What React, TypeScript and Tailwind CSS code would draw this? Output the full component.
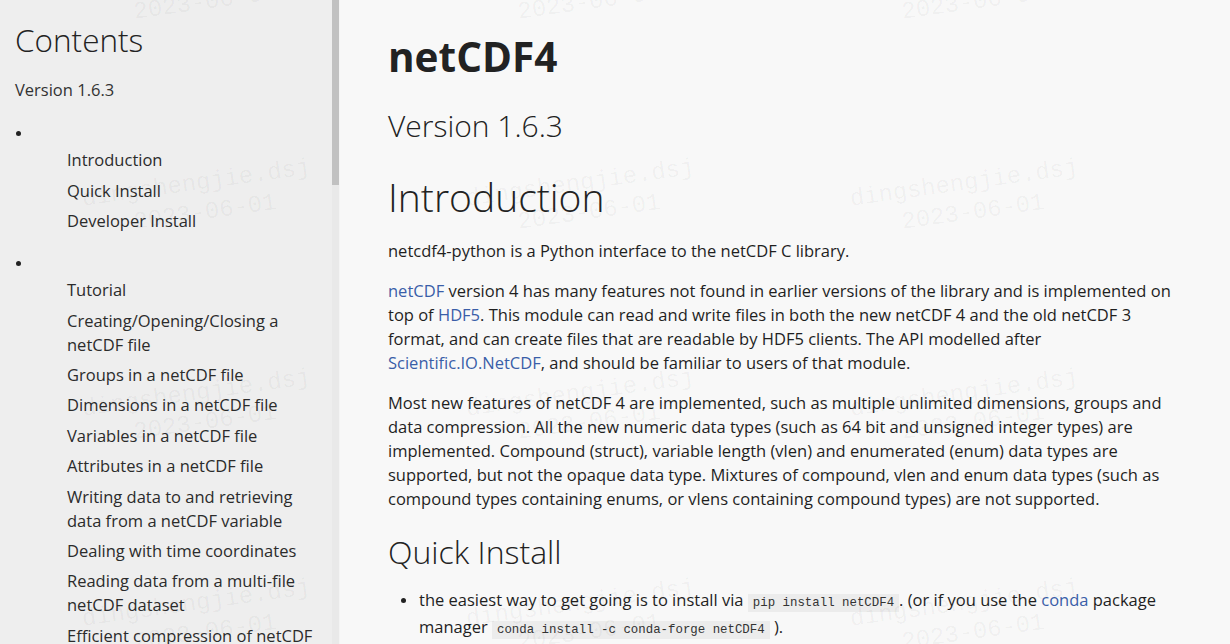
import React from 'react';

const intro = ['Introduction', 'Quick Install', 'Developer Install'];

const tutorial = [
  'Tutorial',
  'Creating/Opening/Closing a netCDF file',
  'Groups in a netCDF file',
  'Dimensions in a netCDF file',
  'Variables in a netCDF file',
  'Attributes in a netCDF file',
  'Writing data to and retrieving data from a netCDF variable',
  'Dealing with time coordinates',
  'Reading data from a multi-file netCDF dataset',
  'Efficient compression of netCDF variables',
  'Beyond homogeneous arrays of a fixed type - compound data types',
];

const wmX = [80, 464, 848];
const wmY = [-25, 185, 395, 605];

function Bullet() {
  return (
    <div className="h-6 flex items-center">
      <span className="block w-[5px] h-[5px] rounded-full bg-[#222] ml-[1px]" />
    </div>
  );
}

function TocGroup({ items }: { items: string[] }) {
  return (
    <li>
      <Bullet />
      <ul className="pl-[52px]">
        {items.map((t) => (
          <li key={t} className="py-[3.2px] leading-6">
            <a className="text-[#2b2b2b]">{t}</a>
          </li>
        ))}
      </ul>
    </li>
  );
}

function Code({ children }: { children: React.ReactNode }) {
  return (
    <code className="bg-[#ececec] px-[5px] py-[2px] text-[12.4px] text-[#333] font-['Liberation_Mono',monospace]">
      {children}
    </code>
  );
}

function Watermark() {
  return (
    <div className="absolute inset-0 pointer-events-none overflow-hidden">
      {wmY.map((y) =>
        wmX.map((x) => (
          <div
            key={`${x}-${y}`}
            className="absolute origin-top-left -rotate-[8deg] font-['Liberation_Mono',monospace] text-[24px] leading-[30px] text-black/[0.045] whitespace-nowrap"
            style={{ left: x, top: y }}
          >
            <div>dingshengjie.dsj</div>
            <div className="pl-[48px]">2023-06-01</div>
          </div>
        ))
      )}
    </div>
  );
}

export default function App() {
  return (
    <div className="relative flex h-[644px] w-[1230px] overflow-hidden font-['Open_Sans',sans-serif] text-[16.5px] text-[#1f1f1f]">
      <aside className="flex w-[340px] shrink-0 bg-[#eeeeee]">
        <nav className="w-[332px] pl-[15px] pr-[14px] overflow-hidden">
          <h1 className="mt-[20px] text-[31.5px] leading-[40px] font-light text-[#222]">Contents</h1>
          <p className="mt-[18px] leading-6 text-[#333]">Version 1.6.3</p>
          <ul className="mt-[19px] flex flex-col gap-[15px]">
            <TocGroup items={intro} />
            <TocGroup items={tutorial} />
          </ul>
        </nav>
        <div className="w-[8px] bg-[#e9e9e9] border-r border-[#f4f4f4]">
          <div className="h-[185px] w-[7px] bg-[#c1c1c1]" />
        </div>
      </aside>

      <main className="flex-1 bg-[#f8f8f8] pl-[48px] pt-[33px]">
        <div className="w-[790px]">
          <h1 className="text-[40.5px] leading-[48px] font-bold text-[#222]">netCDF4</h1>
          <h2 className="mt-[25px] text-[30px] leading-[40px] font-light text-[#222]">Version 1.6.3</h2>
          <h1 className="mt-[27px] text-[39px] leading-[48px] font-light text-[#222]">Introduction</h1>
          <p className="mt-[18px] leading-6">netcdf4-python is a Python interface to the netCDF C library.</p>
          <p className="mt-4 leading-6">
            <a className="text-[#3a5ea8]">netCDF</a> version 4 has many features not found in earlier versions of the library and is implemented on top of{' '}
            <a className="text-[#3a5ea8]">HDF5</a>. This module can read and write files in both the new netCDF 4 and the old netCDF 3 format, and can create files that are readable by HDF5 clients. The API modelled after{' '}
            <a className="text-[#3a5ea8]">Scientific.IO.NetCDF</a>, and should be familiar to users of that module.
          </p>
          <p className="mt-4 leading-6">
            Most new features of netCDF 4 are implemented, such as multiple unlimited dimensions, groups and data compression. All the new numeric data types (such as 64 bit and unsigned integer types) are implemented. Compound (struct), variable length (vlen) and enumerated (enum) data types are supported, but not the opaque data type. Mixtures of compound, vlen and enum data types (such as compound types containing enums, or vlens containing compound types) are not supported.
          </p>
          <h2 className="mt-[21px] text-[32px] leading-[40px] font-light text-[#222]">Quick Install</h2>
          <ul className="mt-4 flex flex-col">
            <li className="flex leading-6">
              <span className="w-[31px] shrink-0 flex justify-center pt-[10px]">
                <span className="block w-[5px] h-[5px] rounded-full bg-[#222]" />
              </span>
              <span>
                the easiest way to get going is to install via <Code>pip install netCDF4</Code>. (or if you use the{' '}
                <a className="text-[#3a5ea8]">conda</a> package manager <Code>conda install -c conda-forge netCDF4</Code> ).
              </span>
            </li>
          </ul>
        </div>
      </main>

      <Watermark />
    </div>
  );
}
